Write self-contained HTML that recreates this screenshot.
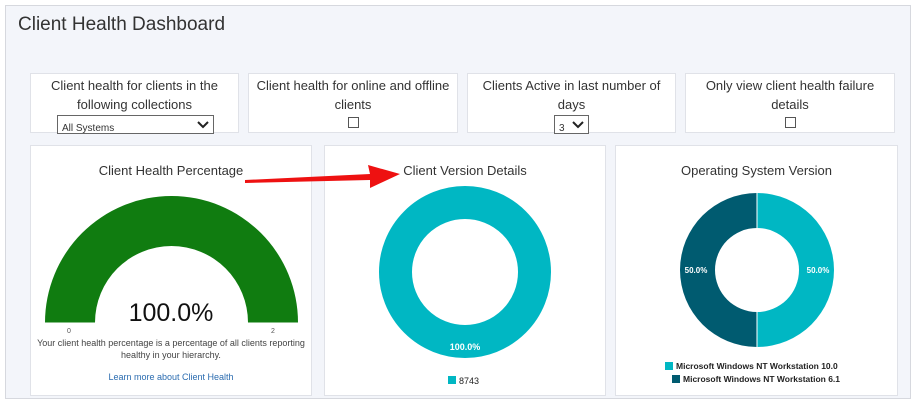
<!DOCTYPE html>
<html><head><style>
body{margin:0;width:913px;height:401px;background:#fff;font-family:"Liberation Sans",sans-serif;overflow:hidden;position:relative}
.frame{position:absolute;left:5px;top:5px;width:906px;height:394px;background:#f3f5fa;border:1px solid #d6d8de;box-sizing:border-box}
.t{position:absolute;left:18px;top:14px;font-size:19px;color:#333}
.box{position:absolute;top:73px;height:60px;background:#fff;border:1px solid #e0e2e8;box-sizing:border-box;text-align:center;font-size:13px;color:#333;line-height:19px;padding-top:2px}
.pan{position:absolute;top:145px;height:251px;background:#fff;border:1px solid #e0e2e8;box-sizing:border-box;text-align:center}
.pt{position:absolute;left:0;right:0;top:17px;font-size:13px;color:#333}
.cb{display:inline-block;width:11px;height:11px;border:1px solid #555;box-sizing:border-box;margin-top:2px}
.sel{position:absolute;border:1px solid #666;background:#fff;font-size:10px;text-align:left;box-sizing:border-box}
</style></head><body>
<div class="frame"></div>
<div class="t">Client Health Dashboard</div>
<div class="box" style="left:30px;width:209px">Client health for clients in the<br>following collections
<div class="sel" style="left:26px;top:41px;width:157px;height:19px;padding:3px 4px">All Systems<svg style="position:absolute;right:4px;top:5px" width="12" height="8"><path d="M1 1l5 5 5-5" stroke="#222" stroke-width="2" fill="none"/></svg></div></div>
<div class="box" style="left:248px;width:210px">Client health for online and offline<br>clients<br><span class="cb"></span></div>
<div class="box" style="left:467px;width:209px">Clients Active in last number of<br>days
<div class="sel" style="left:86px;top:41px;width:35px;height:19px;padding:3px 4px">3<svg style="position:absolute;right:4px;top:5px" width="12" height="8"><path d="M1 1l5 5 5-5" stroke="#222" stroke-width="2" fill="none"/></svg></div></div>
<div class="box" style="left:685px;width:210px">Only view client health failure<br>details<br><span class="cb"></span></div>

<div class="pan" style="left:30px;width:282px"><div class="pt">Client Health Percentage</div></div>
<div class="pan" style="left:324px;width:282px"><div class="pt">Client Version Details</div></div>
<div class="pan" style="left:615px;width:283px"><div class="pt">Operating System Version</div></div>

<svg style="position:absolute;left:0;top:0" width="913" height="401">
<path d="M45 322.5A126.5 126.5 0 0 1 298 322.5L248 322.5A76.5 76.5 0 0 0 95 322.5Z" fill="#107c10"/>
<text x="171" y="321" font-size="25" text-anchor="middle" fill="#111" font-family="Liberation Sans">100.0%</text>
<text x="69" y="333" font-size="7" fill="#555" text-anchor="middle">0</text>
<text x="273" y="333" font-size="7" fill="#555" text-anchor="middle">2</text>
<text x="171" y="346" font-size="9" fill="#444" text-anchor="middle">Your client health percentage is a percentage of all clients reporting</text>
<text x="171" y="358" font-size="9" fill="#444" text-anchor="middle">healthy in your hierarchy.</text>
<text x="171" y="380" font-size="9" fill="#2b6cb0" text-anchor="middle">Learn more about Client Health</text>

<circle cx="465" cy="272" r="69.5" fill="none" stroke="#00b7c3" stroke-width="33"/>
<text x="465" y="350" font-size="9" fill="#fff" text-anchor="middle" font-weight="bold">100.0%</text>
<rect x="448" y="376" width="8" height="8" fill="#00b7c3"/>
<text x="459" y="384" font-size="9" fill="#222">8743</text>

<path d="M757 193A77 77 0 0 1 757 347L757 312A42 42 0 0 0 757 228Z" fill="#00b7c3"/>
<path d="M757 193A77 77 0 0 0 757 347L757 312A42 42 0 0 1 757 228Z" fill="#005b70"/>
<line x1="757" y1="193" x2="757" y2="347" stroke="#fff" stroke-width="1"/>
<text x="696" y="273" font-size="8" fill="#fff" text-anchor="middle" font-weight="bold">50.0%</text>
<text x="818" y="273" font-size="8" fill="#fff" text-anchor="middle" font-weight="bold">50.0%</text>
<rect x="665" y="362" width="8" height="8" fill="#00b7c3"/>
<text x="676" y="369" font-size="8.5" fill="#222" font-weight="bold">Microsoft Windows NT Workstation 10.0</text>
<rect x="672" y="375" width="8" height="8" fill="#005b70"/>
<text x="683" y="382" font-size="8.5" fill="#222" font-weight="bold">Microsoft Windows NT Workstation 6.1</text>

<path d="M245 180L370 174L368 165L400 174L370 188L370 180L245 183Z" fill="#ee1111"/>
</svg>
</body></html>
